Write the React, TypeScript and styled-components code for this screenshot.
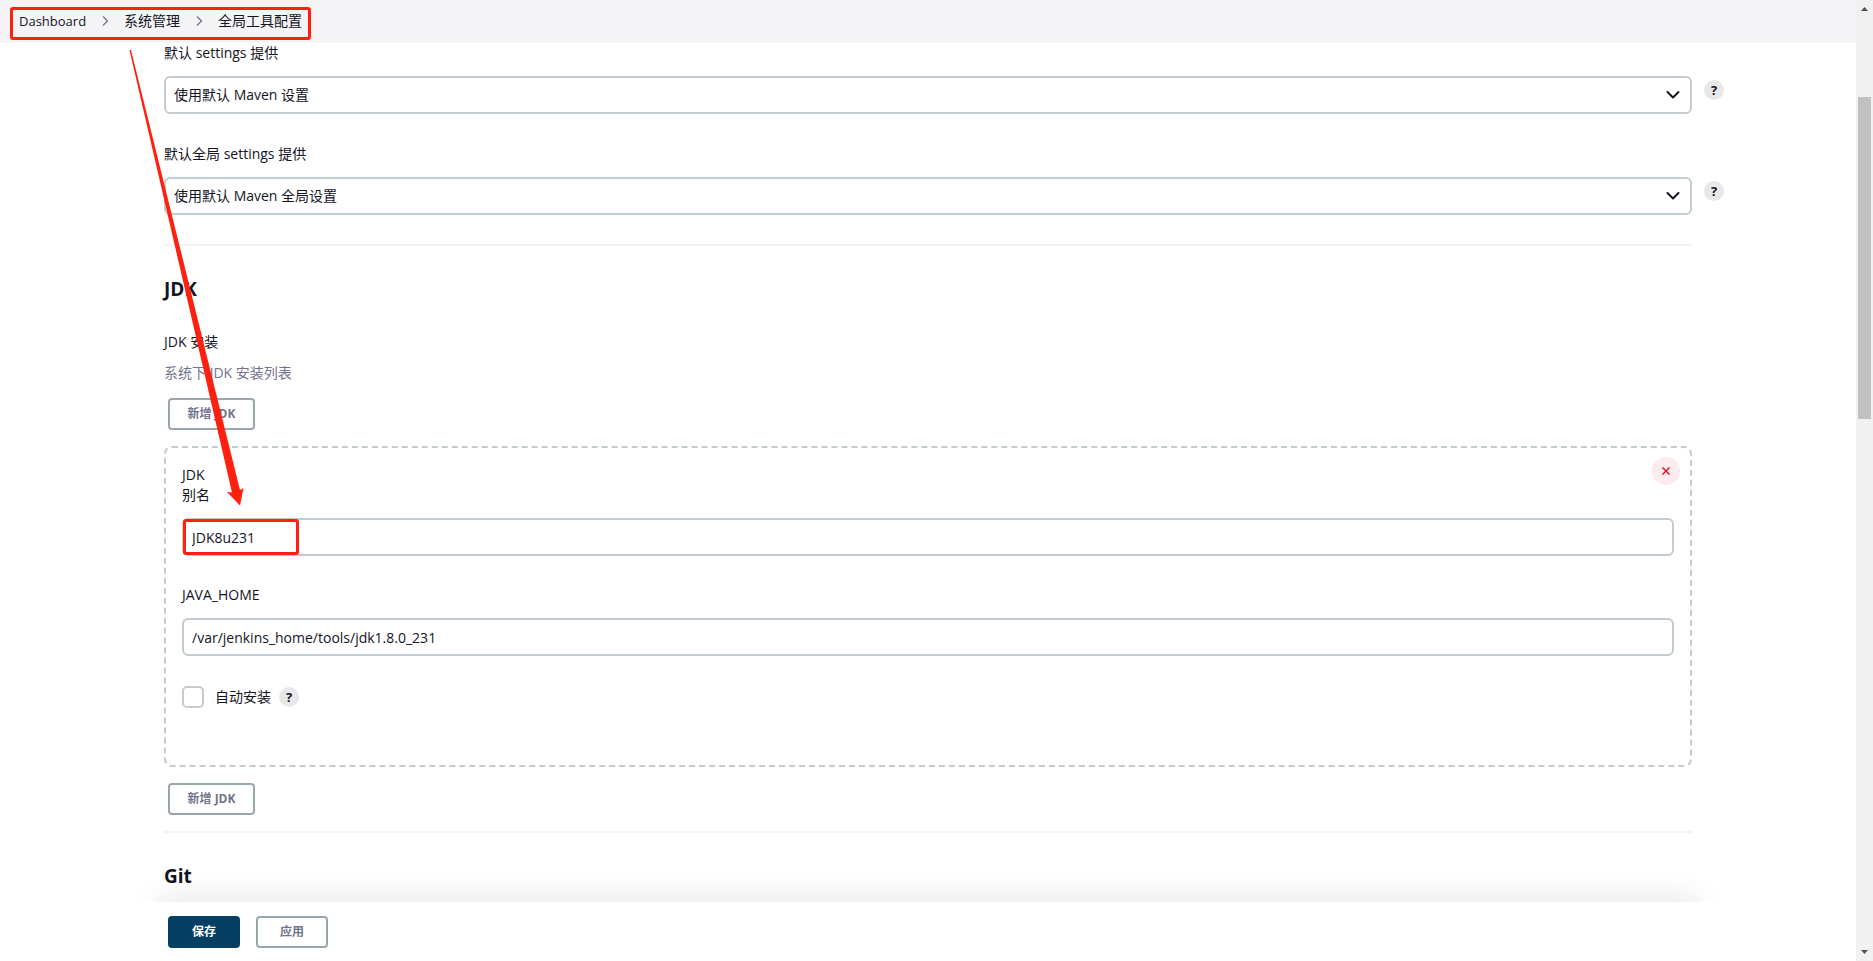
import React from "react";
import styled, { createGlobalStyle } from "styled-components";

const sans = `"Open Sans", "Noto Sans CJK SC", sans-serif`;

const GlobalStyle = createGlobalStyle`
  * { box-sizing: border-box; }
  body { margin: 0; background: #fff; color: #14141f; font: 400 14px/20px ${sans}; }
  button, input, select { font: inherit; color: inherit; }
  h2, p { margin: 0; }
`;

const Window = styled.div`
  position: relative;
  display: grid;
  grid-template-columns: minmax(0, 1fr) 17px;
  height: 100vh;
  overflow: hidden;
`;

const Page = styled.div`
  display: flex;
  flex-direction: column;
  min-width: 0;
  min-height: 0;
`;

const Breadcrumbs = styled.nav`
  display: flex;
  align-items: center;
  gap: 13px;
  flex: none;
  height: 43px;
  padding: 0 19px 2px;
  background: #f4f4f7;
`;

const Crumb = styled.a<{ $latin?: boolean }>`
  color: inherit;
  font-size: ${(p) => (p.$latin ? 13 : 14)}px;
  text-decoration: none;
`;

const Content = styled.main`
  position: relative;
  flex: 1;
  min-height: 0;
  overflow: hidden;
  padding: 0 164px;
`;

const FooterShade = styled.div`
  position: absolute;
  left: 164px;
  right: 164px;
  bottom: -60px;
  height: 60px;
  box-shadow: 0 0 30px 6px rgba(0, 0, 0, 0.09);
`;

const Field = styled.div<{ $space: number }>`
  display: flex;
  flex-direction: column;
  gap: 13px;
  margin-bottom: ${(p) => p.$space}px;
`;

const Label = styled.label`
  line-height: 20px;
`;

const SelectBox = styled.div`
  position: relative;
  display: flex;
`;

const Select = styled.select`
  appearance: none;
  width: 100%;
  height: 38px;
  padding: 0 40px 0 8px;
  border: 2px solid #c3ccd1;
  border-radius: 6px;
  background: #fff;
`;

const SelectArrow = styled.svg`
  position: absolute;
  right: 12px;
  top: 12px;
  pointer-events: none;
`;

const Input = styled.input`
  width: 100%;
  height: 38px;
  padding: 0 8px;
  border: 2px solid #c3ccd1;
  border-radius: 6px;
  background: #fff;
`;

const Help = styled.button`
  display: grid;
  place-items: center;
  width: 20px;
  height: 20px;
  padding: 0;
  border: 0;
  border-radius: 50%;
  background: #e8e8e9;
  font: 700 13px/20px ${sans};
`;

const SideHelp = styled(Help)`
  position: absolute;
  right: -32px;
  top: 4px;
`;

const Section = styled.section`
  border-top: 2px solid #f3f3f8;
`;

const Heading = styled.h2`
  padding: 30px 0;
  font-size: 19px;
  line-height: 26px;
  font-weight: 700;
`;

const Description = styled.p`
  margin: 11px 0 15px;
  color: #73738c;
`;

const Button = styled.button<{ $kind?: "primary" | "plain" }>`
  height: 32px;
  min-width: ${(p) => (p.$kind ? 72 : 87)}px;
  padding: 0 14px;
  border: 2px solid ${(p) => (p.$kind === "primary" ? "#063f61" : "#98a6ae")};
  border-radius: 4px;
  background: ${(p) => (p.$kind === "primary" ? "#063f61" : "#fff")};
  color: ${(p) => (p.$kind === "primary" ? "#fff" : "#73738c")};
  font-size: 12px;
  line-height: 18px;
  font-weight: 700;
`;

const ButtonRow = styled.div<{ $after?: number }>`
  display: flex;
  gap: 16px;
  margin: 0 4px ${(p) => p.$after ?? 0}px;
`;

const Installation = styled.fieldset`
  position: relative;
  margin: 0 0 16px;
  height: 321px;
  padding: 16px;
  border: 2px dashed #c3ccd1;
  border-radius: 8px;
`;

const ToolName = styled.p`
  line-height: 21px;
`;

const Remove = styled.button`
  position: absolute;
  top: 9px;
  right: 10px;
  display: grid;
  place-items: center;
  width: 28px;
  height: 28px;
  padding: 0;
  border: 0;
  border-radius: 50%;
  background: #fdebee;
`;

const CheckRow = styled.div`
  display: flex;
  align-items: center;
`;

const Checkbox = styled.input`
  appearance: none;
  width: 22px;
  height: 22px;
  margin: 0 11px 0 0;
  border: 2px solid #c3ccd1;
  border-radius: 5px;
  background: #fff;
`;

const CheckLabel = styled.label`
  margin-right: 8px;
`;

const Footer = styled.footer`
  flex: none;
  padding: 14px 164px 13px;
  background: #fff;
`;

const Scrollbar = styled.div`
  display: flex;
  flex-direction: column;
  align-items: center;
  background: #f1f1f1;
`;

const ScrollArrow = styled.svg`
  flex: none;
`;

const ScrollTrack = styled.div`
  display: grid;
  flex: 1;
  width: 13px;
  grid-template-rows: 80fr 322fr 525fr;
`;

const ScrollThumb = styled.div`
  grid-row: 2;
  background: #c1c1c1;
`;

const Annotations = styled.svg`
  position: absolute;
  left: 0;
  top: 0;
  pointer-events: none;
`;

const Separator = () => (
  <svg width="12" height="12" viewBox="0 0 12 12" fill="none" stroke="#73738c" strokeWidth="1.3" aria-hidden="true">
    <path d="M4 1.5 8.5 6 4 10.5" />
  </svg>
);

const Dropdown = ({ id, value }: { id: string; value: string }) => (
  <SelectBox>
    <Select id={id}>
      <option>{value}</option>
    </Select>
    <SelectArrow width="14" height="14" viewBox="0 0 14 14" fill="none" stroke="#14141f" strokeWidth="2">
      <path d="M1.5 4 7 9.5 12.5 4" strokeLinecap="round" strokeLinejoin="round" />
    </SelectArrow>
    <SideHelp type="button">?</SideHelp>
  </SelectBox>
);

export default function App() {
  return (
    <>
      <GlobalStyle />
      <Window>
        <Page>
          <Breadcrumbs>
            <Crumb href="#" $latin>Dashboard</Crumb>
            <Separator />
            <Crumb href="#">系统管理</Crumb>
            <Separator />
            <Crumb href="#">全局工具配置</Crumb>
          </Breadcrumbs>
          <Content>
            <Field $space={30}>
              <Label htmlFor="settings">默认 settings 提供</Label>
              <Dropdown id="settings" value="使用默认 Maven 设置" />
            </Field>
            <Field $space={29}>
              <Label htmlFor="global">默认全局 settings 提供</Label>
              <Dropdown id="global" value="使用默认 Maven 全局设置" />
            </Field>
            <Section>
              <Heading>JDK</Heading>
              <p>JDK 安装</p>
              <Description>系统下 JDK 安装列表</Description>
              <ButtonRow $after={16}>
                <Button type="button">新增 JDK</Button>
              </ButtonRow>
              <Installation>
                <Remove type="button" aria-label="删除">
                  <svg width="10" height="10" viewBox="0 0 10 10" stroke="#e6001f" strokeWidth="1.4">
                    <path d="M1.5 1.5 8.5 8.5M8.5 1.5 1.5 8.5" />
                  </svg>
                </Remove>
                <ToolName>JDK</ToolName>
                <Field $space={29}>
                  <Label htmlFor="name">别名</Label>
                  <Input id="name" defaultValue="JDK8u231" />
                </Field>
                <Field $space={30}>
                  <Label htmlFor="home">JAVA_HOME</Label>
                  <Input id="home" defaultValue="/var/jenkins_home/tools/jdk1.8.0_231" />
                </Field>
                <CheckRow>
                  <Checkbox type="checkbox" id="auto" />
                  <CheckLabel htmlFor="auto">自动安装</CheckLabel>
                  <Help type="button">?</Help>
                </CheckRow>
              </Installation>
              <ButtonRow $after={16}>
                <Button type="button">新增 JDK</Button>
              </ButtonRow>
            </Section>
            <Section>
              <Heading>Git</Heading>
            </Section>
            <FooterShade />
          </Content>
          <Footer>
            <ButtonRow>
              <Button type="submit" $kind="primary">保存</Button>
              <Button type="button" $kind="plain">应用</Button>
            </ButtonRow>
          </Footer>
        </Page>
        <Scrollbar aria-hidden="true">
          <ScrollArrow width="17" height="17" viewBox="0 0 17 17" fill="#505050"><path d="M5 11h7L8.500 7z" /></ScrollArrow>
          <ScrollTrack><ScrollThumb /></ScrollTrack>
          <ScrollArrow width="17" height="17" viewBox="0 0 17 17" fill="#505050"><path d="M5 6h7L8.500 10z" /></ScrollArrow>
        </Scrollbar>
        <Annotations width="420" height="620" viewBox="0 0 420 620" fill="none" aria-hidden="true">
          <rect x="11.500" y="8.500" width="298" height="30" rx="1.500" stroke="#ff2010" strokeWidth="3" />
          <rect x="184.500" y="520.500" width="113" height="33" rx="1.500" stroke="#ff2010" strokeWidth="3" />
          <path d="M129.500 50h1.500L240 490l3.500-2L240 505.500 227 492l5 .5z" fill="#ff2010" />
        </Annotations>
      </Window>
    </>
  );
}
